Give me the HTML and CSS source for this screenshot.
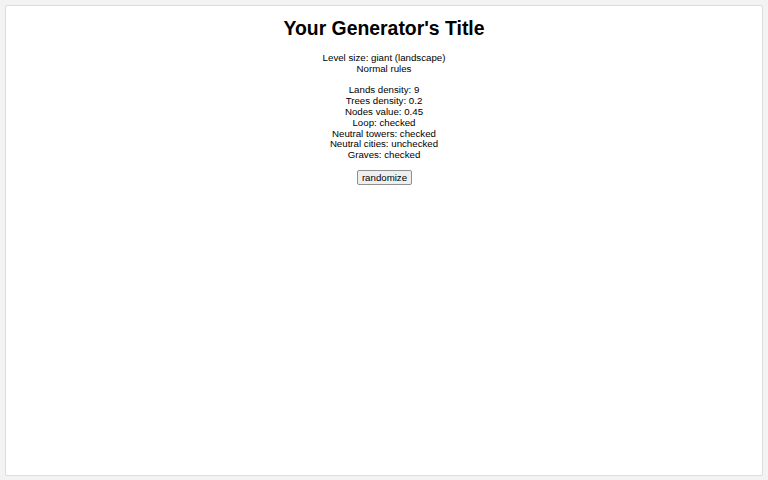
FILE: index.html
```html
<!DOCTYPE html>
<html lang="en">
<head>
    <meta charset="UTF-8">
    <meta name="viewport" content="width=device-width, initial-scale=1.0">
    <title>Your Generator's Title</title>
    <link rel="stylesheet" href="styles.css">
</head>
<body>
    <div class="generator">
        <h1 class="generator-title">Your Generator's Title</h1>
        <div class="output">
            <p>Level size: giant (landscape)<br>Normal rules</p>
            <p>Lands density: 9<br>Trees density: 0.2<br>Nodes value: 0.45<br>Loop: checked<br>Neutral towers: checked<br>Neutral cities: unchecked<br>Graves: checked</p>
        </div>
        <button class="randomize-button">randomize</button>
    </div>
</body>
</html>
```

FILE: styles.css
```css
* {
    margin: 0;
    padding: 0;
    box-sizing: border-box;
}

body {
    background: #f3f3f3;
    height: 100vh;
    padding: 5px 5px 4px;
    font-family: 'Liberation Sans', Arial, sans-serif;
}

.generator {
    height: 100%;
    background: #fff;
    border: 1px solid #dcdcdc;
    border-radius: 2px;
    display: flex;
    flex-direction: column;
    align-items: center;
    text-align: center;
    padding-top: 11px;
}

.generator-title {
    font-size: 19.4px;
    line-height: 22px;
    font-weight: bold;
    color: #000;
    margin-bottom: 14px;
}

.output {
    font-size: 9.7px;
    line-height: 10.8px;
    color: #000;
}

.output p {
    margin-bottom: 10.8px;
}

.output p:last-child {
    margin-bottom: 9px;
}

.randomize-button {
    font-family: 'Liberation Sans', Arial, sans-serif;
    font-size: 9.7px;
    line-height: 11px;
    padding: 1px 4px;
    margin-left: 1px;
    background: #efefef;
    border: 1px solid #8f8f8f;
    border-radius: 2px;
    color: #000;
}
```
